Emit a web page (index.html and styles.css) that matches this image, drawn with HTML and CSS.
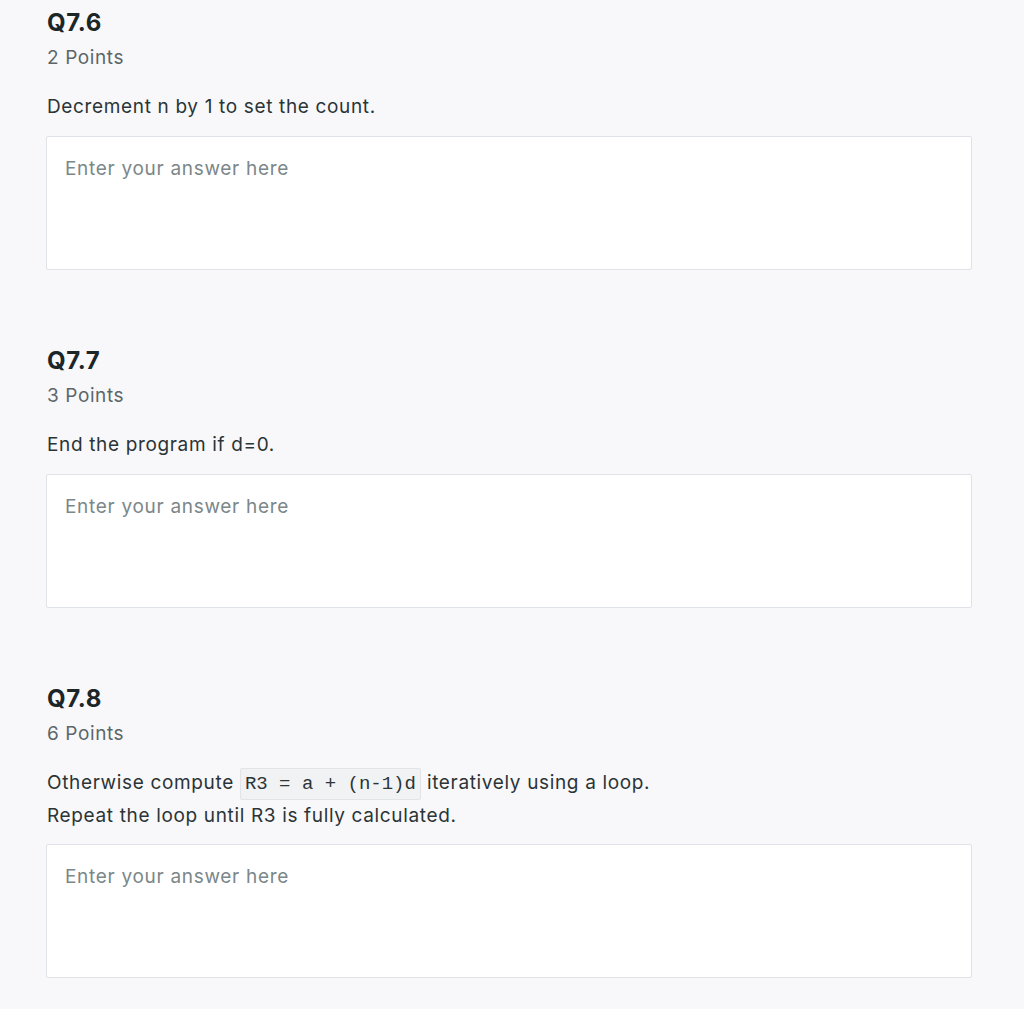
FILE: index.html
```html
<!DOCTYPE html>
<html lang="en">
<head>
<meta charset="utf-8">
<title>Questions</title>
<link rel="stylesheet" href="styles.css">
</head>
<body>
<main class="page">
  <section class="question">
    <h2 class="q-title">Q7.6</h2>
    <div class="q-points">2 Points</div>
    <div class="q-body"><p>Decrement n by 1 to set the count.</p></div>
    <div class="answer"><span class="placeholder">Enter your answer here</span></div>
  </section>
  <section class="question">
    <h2 class="q-title">Q7.7</h2>
    <div class="q-points">3 Points</div>
    <div class="q-body"><p>End the program if d=0.</p></div>
    <div class="answer"><span class="placeholder">Enter your answer here</span></div>
  </section>
  <section class="question">
    <h2 class="q-title">Q7.8</h2>
    <div class="q-points">6 Points</div>
    <div class="q-body"><p>Otherwise compute <code>R3 = a + (n-1)d</code> iteratively using a loop.<br>Repeat the loop until R3 is fully calculated.</p></div>
    <div class="answer answer-last"><span class="placeholder">Enter your answer here</span></div>
  </section>
</main>
</body>
</html>
```
FILE: styles.css
```css
html, body {
  margin: 0;
  padding: 0;
  background: #f8f8fa;
}
body {
  font-family: Inter, Lato, sans-serif;
  color: #2b3436;
}
.page {
  width: 926px;
  padding: 9px 0 0 46px;
  display: flex;
  flex-direction: column;
  gap: 77px;
}
.question {
  display: flex;
  flex-direction: column;
}
.q-title {
  margin: 0 0 0 1px;
  font-size: 24px;
  line-height: 28px;
  font-weight: 700;
  color: #1c2627;
  letter-spacing: 0.6px;
}
.q-points {
  margin: 8px 0 0 1px;
  font-size: 19px;
  line-height: 26px;
  color: #5c6668;
  letter-spacing: 0.6px;
}
.q-body {
  margin: 19px 0 0 1px;
  font-size: 19px;
  line-height: 33px;
  color: #2b3436;
  letter-spacing: 0.65px;
}
.q-body p { margin: 0; }
code {
  font-family: "Liberation Mono", monospace;
  font-size: 19px;
  line-height: 1;
  letter-spacing: 0;
  background: #f1f2f4;
  border: 1px solid #e2e4e7;
  border-radius: 2px;
  padding: 4px 4px;
}
.answer {
  margin-top: 13px;
  background: #fff;
  border: 1px solid #dfe2e6;
  border-radius: 2px;
  padding: 20px 18px;
  box-sizing: border-box;
  height: 134px;
}
.answer-last {
  margin-top: 12px;
}
.placeholder {
  font-size: 19px;
  line-height: 24px;
  color: #7b8789;
  letter-spacing: 0.7px;
}
```
